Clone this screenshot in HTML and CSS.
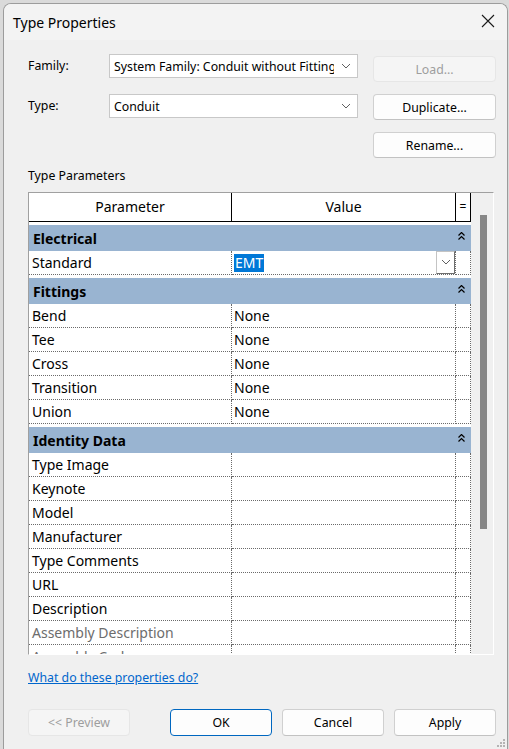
FILE: index.html
```html
<!DOCTYPE html>
<html>
<head>
<title>Type Properties</title>
<link rel="stylesheet" href="styles.css">
</head>
<body>

  <div class="window">
    <div class="titlebar">
      <span class="title">Type Properties</span>
      <svg class="close-icon" width="14" height="14" viewBox="0 0 14 14">
        <path d="M1 1 L13 13 M13 1 L1 13" stroke="#1a1a1a" stroke-width="1.1" fill="none"/>
      </svg>
    </div>

    <div class="content">
      <div class="type-form">
        <span class="field-label first-row">Family:</span>
        <div class="select first-row">
          <span class="select-text">System Family: Conduit without Fittings</span>
          <svg class="chevron" width="10" height="6" viewBox="0 0 10 6"><path d="M1 1 L5 5 L9 1" stroke="#606060" fill="none"/></svg>
        </div>
        <button class="btn" disabled>Load...</button>

        <span class="field-label">Type:</span>
        <div class="select">
          <span class="select-text">Conduit</span>
          <svg class="chevron" width="10" height="6" viewBox="0 0 10 6"><path d="M1 1 L5 5 L9 1" stroke="#606060" fill="none"/></svg>
        </div>
        <button class="btn">Duplicate...</button>

        <span></span>
        <span></span>
        <button class="btn">Rename...</button>
      </div>

      <div class="section-label">Type Parameters</div>

      <div class="param-box">
        <div class="param-grid">
          <div class="param-row header-row">
            <div class="cell">Parameter</div>
            <div class="cell">Value</div>
            <div class="cell eq-cell">=</div>
          </div>

          <div class="group-row">
            <span>Electrical</span>
            <svg class="collapse-icon" width="7" height="8" viewBox="0 0 7 8"><path d="M0.5 3.5 L3.5 0.5 L6.5 3.5 M0.5 7.5 L3.5 4.5 L6.5 7.5" stroke="#000" stroke-width="1.2" fill="none"/></svg>
          </div>
          <div class="param-row">
            <div class="cell">Standard</div>
            <div class="cell value-cell">
              <span class="selected-value">EMT</span>
              <span class="cell-dropdown">
                <svg width="10" height="6" viewBox="0 0 10 6"><path d="M1 1 L5 5 L9 1" stroke="#606060" fill="none"/></svg>
              </span>
            </div>
            <div class="cell"></div>
          </div>

          <div class="group-row">
            <span>Fittings</span>
            <svg class="collapse-icon" width="7" height="8" viewBox="0 0 7 8"><path d="M0.5 3.5 L3.5 0.5 L6.5 3.5 M0.5 7.5 L3.5 4.5 L6.5 7.5" stroke="#000" stroke-width="1.2" fill="none"/></svg>
          </div>
          <div class="param-row"><div class="cell">Bend</div><div class="cell">None</div><div class="cell"></div></div>
          <div class="param-row"><div class="cell">Tee</div><div class="cell">None</div><div class="cell"></div></div>
          <div class="param-row"><div class="cell">Cross</div><div class="cell">None</div><div class="cell"></div></div>
          <div class="param-row"><div class="cell">Transition</div><div class="cell">None</div><div class="cell"></div></div>
          <div class="param-row"><div class="cell">Union</div><div class="cell">None</div><div class="cell"></div></div>

          <div class="group-row">
            <span>Identity Data</span>
            <svg class="collapse-icon" width="7" height="8" viewBox="0 0 7 8"><path d="M0.5 3.5 L3.5 0.5 L6.5 3.5 M0.5 7.5 L3.5 4.5 L6.5 7.5" stroke="#000" stroke-width="1.2" fill="none"/></svg>
          </div>
          <div class="param-row"><div class="cell">Type Image</div><div class="cell"></div><div class="cell"></div></div>
          <div class="param-row"><div class="cell">Keynote</div><div class="cell"></div><div class="cell"></div></div>
          <div class="param-row"><div class="cell">Model</div><div class="cell"></div><div class="cell"></div></div>
          <div class="param-row"><div class="cell">Manufacturer</div><div class="cell"></div><div class="cell"></div></div>
          <div class="param-row"><div class="cell">Type Comments</div><div class="cell"></div><div class="cell"></div></div>
          <div class="param-row"><div class="cell">URL</div><div class="cell"></div><div class="cell"></div></div>
          <div class="param-row"><div class="cell">Description</div><div class="cell"></div><div class="cell"></div></div>
          <div class="param-row"><div class="cell muted">Assembly Description</div><div class="cell"></div><div class="cell"></div></div>
          <div class="param-row"><div class="cell muted">Assembly Code</div><div class="cell"></div><div class="cell"></div></div>
        </div>
        <div class="scroll-track">
          <div class="scroll-thumb"></div>
        </div>
      </div>

      <a class="help-link" href="#">What do these properties do?</a>

      <div class="footer-buttons">
        <button class="btn" disabled>&lt;&lt; Preview</button>
        <button class="btn primary">OK</button>
        <button class="btn">Cancel</button>
        <button class="btn">Apply</button>
      </div>
    </div>

    <svg class="resize-grip" width="10" height="10" viewBox="0 0 10 10">
      <rect x="6" y="0" width="2" height="2" fill="#b4b4b4"/>
      <rect x="3" y="3" width="2" height="2" fill="#b4b4b4"/>
      <rect x="6" y="3" width="2" height="2" fill="#b4b4b4"/>
      <rect x="0" y="6" width="2" height="2" fill="#b4b4b4"/>
      <rect x="3" y="6" width="2" height="2" fill="#b4b4b4"/>
      <rect x="6" y="6" width="2" height="2" fill="#b4b4b4"/>
    </svg>
  </div>

</body>
</html>
```

FILE: styles.css
```css
:root {
  --dialog-bg: #f0f0f0;
  --titlebar-bg: #f3f3f3;
  --window-border: #9c9c9c;
  --group-blue: #99b4d1;
  --select-blue: #0078d7;
  --link-blue: #0066cc;
  --button-border: #d0d0d0;
  --grid-dots: #6a6a6a;
  --text-color: #000;
}

body {
  margin: 0;
  height: 749px;
  overflow: hidden;
  background-color: #dadada;
  font-family: "Noto Sans", sans-serif;
  font-size: 12.3px;
  color: var(--text-color);
}

.window {
  position: relative;
  box-sizing: border-box;
  width: 505px;
  height: 746px;
  margin: 3px 1px 0 3px;
  border: 1px solid var(--window-border);
  border-bottom: none;
  border-radius: 8px 8px 0 0;
  background-color: var(--dialog-bg);
  overflow: hidden;
}

.titlebar {
  height: 36px;
  display: flex;
  align-items: center;
  justify-content: space-between;
  padding: 0 12px 0 9px;
  background-color: var(--titlebar-bg);
}

.title {
  font-size: 14px;
}

.close-icon {
  margin-top: -2px;
}

.content {
  padding: 0 11px 0 24px;
}

/* Family / Type pickers with the side buttons */
.type-form {
  display: grid;
  grid-template-columns: 66px 249px 123px;
  grid-auto-rows: 26px;
  column-gap: 15px;
  row-gap: 12px;
  margin-top: 16px;
}

.field-label {
  height: 24px;
  line-height: 24px;
}

.select {
  box-sizing: border-box;
  height: 24px;
  display: flex;
  align-items: center;
  justify-content: space-between;
  padding: 0 6px 0 4px;
  background-color: #fff;
  border: 1px solid #c8c8c8;
}

.first-row {
  margin-top: -2px;
}

.select-text {
  width: 220px;
  white-space: nowrap;
  overflow: hidden;
}

.btn {
  box-sizing: border-box;
  height: 26px;
  padding: 0;
  font-family: "Noto Sans", sans-serif;
  font-size: 12.3px;
  color: var(--text-color);
  background-color: #fdfdfd;
  border: 1px solid var(--button-border);
  border-bottom-color: #c2c2c2;
  border-radius: 4px;
}

.btn:disabled {
  background-color: #f5f5f5;
  border-color: #e6e6e6;
  color: #9e9e9e;
}

.btn.primary {
  border-color: #0067c0;
}

.section-label {
  margin-top: 10px;
  line-height: 16px;
}

/* Parameter table */
.param-box {
  box-sizing: border-box;
  width: 466px;
  height: 463px;
  margin-top: 8px;
  display: flex;
  border-top: 1px solid #a0a0a0;
  border-left: 1px solid #a0a0a0;
  border-right: 1px solid #fff;
  border-bottom: 1px solid #fff;
}

.param-grid {
  width: 442px;
  background-color: #fff;
  overflow: hidden;
  font-size: 14px;
}

.param-row {
  display: grid;
  grid-template-columns: 203px 224px 15px;
  height: 24px;
}

.cell {
  box-sizing: border-box;
  height: 24px;
  line-height: 23px;
  padding-left: 3px;
  white-space: nowrap;
  border-right: 1px dotted var(--grid-dots);
  border-bottom: 1px dotted var(--grid-dots);
}

.cell:nth-child(2) {
  padding-left: 2px;
}

.cell.muted {
  color: #6d6d6d;
}

.header-row {
  height: 29px;
}

.header-row .cell {
  height: 29px;
  line-height: 28px;
  padding: 0;
  text-align: center;
  border-right: 1px solid #000;
  border-bottom: 1px solid #000;
}

.header-row .eq-cell {
  font-size: 12px;
}

.group-row {
  height: 26px;
  margin-top: 3px;
  display: flex;
  align-items: center;
  justify-content: space-between;
  padding: 0 6px 0 4px;
  background-color: var(--group-blue);
  font-weight: 700;
}

.collapse-icon {
  margin-top: -5px;
}

.value-cell {
  display: flex;
  align-items: center;
  justify-content: space-between;
}

.selected-value {
  line-height: 18px;
  padding: 0 1px;
  background-color: var(--select-blue);
  color: #fff;
}

.cell-dropdown {
  box-sizing: border-box;
  width: 19px;
  height: 23px;
  margin-top: -1px;
  display: flex;
  align-items: center;
  justify-content: center;
  background-color: #fff;
  border: 1px solid #c4c4c4;
  border-right-color: #6f6f6f;
  border-bottom-color: #6f6f6f;
}

.scroll-track {
  width: 22px;
  padding: 22px 0 0 9px;
  box-sizing: border-box;
  background-color: var(--dialog-bg);
}

.scroll-thumb {
  width: 7px;
  height: 314px;
  background-color: #878787;
}

/* Footer */
.help-link {
  display: inline-block;
  margin-top: 15px;
  line-height: 16px;
  color: var(--link-blue);
}

.footer-buttons {
  display: flex;
  gap: 10px;
  margin-top: 23px;
}

.footer-buttons .btn {
  width: 102px;
  height: 27px;
}

.footer-buttons .btn:nth-child(2) {
  margin-left: auto;
}

.resize-grip {
  position: absolute;
  right: 0;
  bottom: 0;
}
```
